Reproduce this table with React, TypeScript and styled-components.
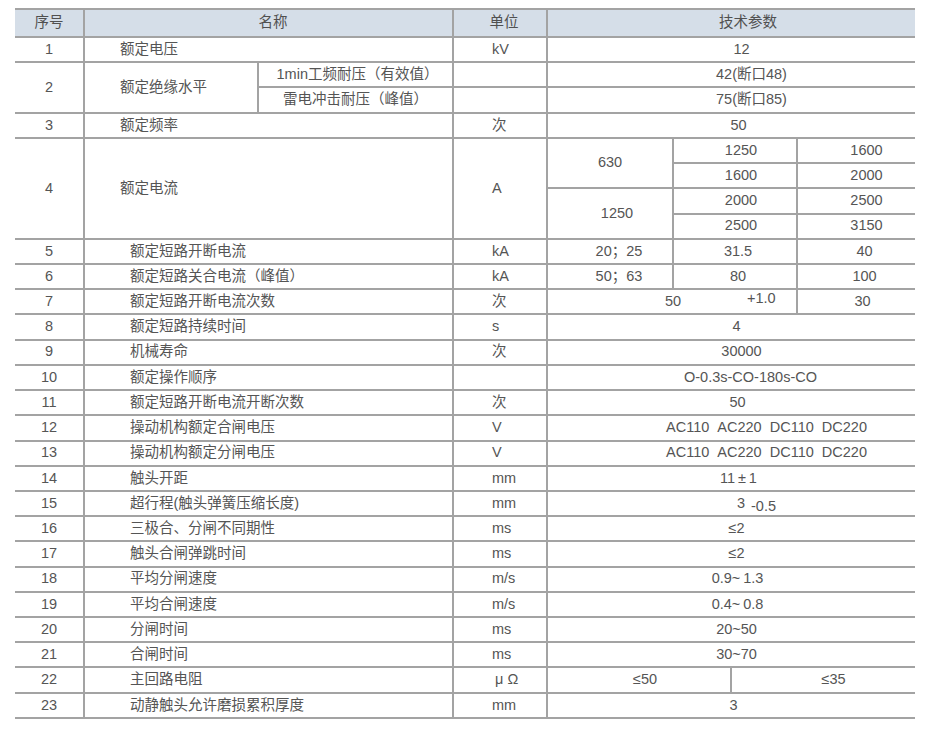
import React from 'react';
import styled, { createGlobalStyle } from 'styled-components';

const Global = createGlobalStyle`
  html, body { margin: 0; padding: 0; background: #ffffff; }
  body { font-family: "Liberation Sans", "Noto Sans CJK SC", sans-serif; }
`;

const LINE = '#a3a3a3';

const Page = styled.div`
  width: 950px;
  height: 736px;
  box-sizing: border-box;
  padding: 8px 0 0 15px;
  background: #ffffff;
`;

const Table = styled.div`
  display: grid;
  width: 900px;
  grid-template-columns: 68px 174px 195px 94px 126px 58px 66px 119px;
  grid-template-rows: 30px repeat(27, 25.22px);
  color: #555555;
  font-size: 14.5px;
`;

type CellProps = {
  $c: number;
  $cs?: number;
  $r: number;
  $rs?: number;
  $pad?: number;
};

const Cell = styled.div<CellProps>`
  grid-column: ${(p) => p.$c} / span ${(p) => p.$cs ?? 1};
  grid-row: ${(p) => p.$r} / span ${(p) => p.$rs ?? 1};
  display: flex;
  align-items: center;
  justify-content: center;
  box-sizing: border-box;
  padding-left: ${(p) => p.$pad ?? 0}px;
  padding-bottom: 1px;
  border-bottom: 2px solid ${LINE};
  border-left: ${(p) => (p.$c === 1 ? 'none' : `2px solid ${LINE}`)};
  white-space: nowrap;
  line-height: 1;
  background: #ffffff;
`;

const HeadCell = styled(Cell)`
  background: #d5dee8;
  border-top: 2px solid ${LINE};
  color: #505050;
`;

const NoCell = styled(Cell)``;

const NameCell = styled(Cell)`
  justify-content: flex-start;
`;

const SubNameCell = styled(Cell)``;

const UnitCell = styled(Cell)`
  justify-content: flex-start;
  padding-left: ${(p) => p.$pad ?? 38}px;
`;

const ValCell = styled(Cell)``;

const SplitVal = styled(Cell)`
  display: grid;
  grid-template-columns: 1fr auto 1fr;
  align-items: center;
`;

const Mid = styled.span`
  grid-column: 2;
`;

const Raised = styled.span`
  grid-column: 3;
  justify-self: start;
  margin-left: 66px;
  position: relative;
  top: -3px;
`;

const Lowered = styled.span`
  margin-left: 6px;
  position: relative;
  top: 3px;
`;

type SimpleRow = {
  no: string;
  name: string;
  unit: string;
  value: React.ReactNode;
  vpad: number;
  npad: number;
  r: number;
};

const VOLTS = 'AC110\u00a0\u00a0AC220\u00a0\u00a0DC110\u00a0\u00a0DC220';

const simpleRows: SimpleRow[] = [
  { no: '1', name: '额定电压', unit: 'kV', value: '12', vpad: 20, npad: 35, r: 2 },
  { no: '3', name: '额定频率', unit: '次', value: '50', vpad: 14, npad: 35, r: 5 },
  { no: '8', name: '额定短路持续时间', unit: 's', value: '4', vpad: 10, npad: 45, r: 13 },
  { no: '9', name: '机械寿命', unit: '次', value: '30000', vpad: 20, npad: 45, r: 14 },
  { no: '10', name: '额定操作顺序', unit: '', value: 'O-0.3s-CO-180s-CO', vpad: 38, npad: 45, r: 15 },
  { no: '11', name: '额定短路开断电流开断次数', unit: '次', value: '50', vpad: 12, npad: 45, r: 16 },
  { no: '12', name: '操动机构额定合闸电压', unit: 'V', value: VOLTS, vpad: 70, npad: 45, r: 17 },
  { no: '13', name: '操动机构额定分闸电压', unit: 'V', value: VOLTS, vpad: 70, npad: 45, r: 18 },
  { no: '14', name: '触头开距', unit: 'mm', value: '11\u2009±\u20091', vpad: 14, npad: 45, r: 19 },
  {
    no: '15',
    name: '超行程(触头弹簧压缩长度)',
    unit: 'mm',
    value: (
      <>
        3<Lowered>-0.5</Lowered>
      </>
    ),
    vpad: 50,
    npad: 45,
    r: 20,
  },
  { no: '16', name: '三极合、分闸不同期性', unit: 'ms', value: '≤2', vpad: 10, npad: 45, r: 21 },
  { no: '17', name: '触头合闸弹跳时间', unit: 'ms', value: '≤2', vpad: 10, npad: 45, r: 22 },
  { no: '18', name: '平均分闸速度', unit: 'm/s', value: '0.9~\u20091.3', vpad: 12, npad: 45, r: 23 },
  { no: '19', name: '平均合闸速度', unit: 'm/s', value: '0.4~\u20090.8', vpad: 12, npad: 45, r: 24 },
  { no: '20', name: '分闸时间', unit: 'ms', value: '20~50', vpad: 10, npad: 45, r: 25 },
  { no: '21', name: '合闸时间', unit: 'ms', value: '30~70', vpad: 10, npad: 45, r: 26 },
  { no: '23', name: '动静触头允许磨损累积厚度', unit: 'mm', value: '3', vpad: 4, npad: 45, r: 28 },
];

type ThreeRow = { no: string; name: string; unit: string; vals: [string, string, string]; r: number };

const threeRows: ThreeRow[] = [
  { no: '5', name: '额定短路开断电流', unit: 'kA', vals: ['20；25', '31.5', '40'], r: 10 },
  { no: '6', name: '额定短路关合电流（峰值）', unit: 'kA', vals: ['50；63', '80', '100'], r: 11 },
];

const currentRows: [string, string][] = [
  ['1250', '1600'],
  ['1600', '2000'],
  ['2000', '2500'],
  ['2500', '3150'],
];

export default function App() {
  return (
    <Page>
      <Global />
      <Table>
        <HeadCell $c={1} $r={1}>序号</HeadCell>
        <HeadCell $c={2} $cs={2} $r={1} $pad={9}>名称</HeadCell>
        <HeadCell $c={4} $r={1} $pad={8}>单位</HeadCell>
        <HeadCell $c={5} $cs={4} $r={1} $pad={33}>技术参数</HeadCell>

        {simpleRows.map((row) => (
          <React.Fragment key={row.no}>
            <NoCell $c={1} $r={row.r}>{row.no}</NoCell>
            <NameCell $c={2} $cs={2} $r={row.r} $pad={row.npad}>{row.name}</NameCell>
            <UnitCell $c={4} $r={row.r}>{row.unit}</UnitCell>
            <ValCell $c={5} $cs={4} $r={row.r} $pad={row.vpad}>{row.value}</ValCell>
          </React.Fragment>
        ))}

        {/* Row 2: insulation level */}
        <NoCell $c={1} $r={3} $rs={2}>2</NoCell>
        <NameCell $c={2} $r={3} $rs={2} $pad={35}>额定绝缘水平</NameCell>
        <SubNameCell $c={3} $r={3} $pad={4}>1min工频耐压（有效值）</SubNameCell>
        <SubNameCell $c={3} $r={4} $pad={0}>雷电冲击耐压（峰值）</SubNameCell>
        <UnitCell $c={4} $r={3} />
        <UnitCell $c={4} $r={4} />
        <ValCell $c={5} $cs={4} $r={3} $pad={40}>42(断口48)</ValCell>
        <ValCell $c={5} $cs={4} $r={4} $pad={40}>75(断口85)</ValCell>

        {/* Row 4: rated current */}
        <NoCell $c={1} $r={6} $rs={4}>4</NoCell>
        <NameCell $c={2} $cs={2} $r={6} $rs={4} $pad={35}>额定电流</NameCell>
        <UnitCell $c={4} $r={6} $rs={4}>A</UnitCell>
        <ValCell $c={5} $r={6} $rs={2} $pad={0}>630</ValCell>
        <ValCell $c={5} $r={8} $rs={2} $pad={14}>1250</ValCell>
        {currentRows.map(([a, b], i) => (
          <React.Fragment key={i}>
            <ValCell $c={6} $cs={2} $r={6 + i} $pad={12}>{a}</ValCell>
            <ValCell $c={8} $r={6 + i} $pad={20}>{b}</ValCell>
          </React.Fragment>
        ))}

        {threeRows.map((row) => (
          <React.Fragment key={row.no}>
            <NoCell $c={1} $r={row.r}>{row.no}</NoCell>
            <NameCell $c={2} $cs={2} $r={row.r} $pad={45}>{row.name}</NameCell>
            <UnitCell $c={4} $r={row.r}>{row.unit}</UnitCell>
            <ValCell $c={5} $r={row.r} $pad={18}>{row.vals[0]}</ValCell>
            <ValCell $c={6} $cs={2} $r={row.r} $pad={6}>{row.vals[1]}</ValCell>
            <ValCell $c={8} $r={row.r} $pad={16}>{row.vals[2]}</ValCell>
          </React.Fragment>
        ))}

        {/* Row 7 */}
        <NoCell $c={1} $r={12}>7</NoCell>
        <NameCell $c={2} $cs={2} $r={12} $pad={45}>额定短路开断电流次数</NameCell>
        <UnitCell $c={4} $r={12}>次</UnitCell>
        <SplitVal $c={5} $cs={3} $r={12} $pad={2}>
          <Mid>50</Mid>
          <Raised>+1.0</Raised>
        </SplitVal>
        <ValCell $c={8} $r={12} $pad={12}>30</ValCell>

        {/* Row 22 */}
        <NoCell $c={1} $r={27}>22</NoCell>
        <NameCell $c={2} $cs={2} $r={27} $pad={45}>主回路电阻</NameCell>
        <UnitCell $c={4} $r={27} $pad={41}>μ Ω</UnitCell>
        <ValCell $c={5} $cs={2} $r={27} $pad={12}>≤50</ValCell>
        <ValCell $c={7} $cs={2} $r={27} $pad={20}>≤35</ValCell>
      </Table>
    </Page>
  );
}
